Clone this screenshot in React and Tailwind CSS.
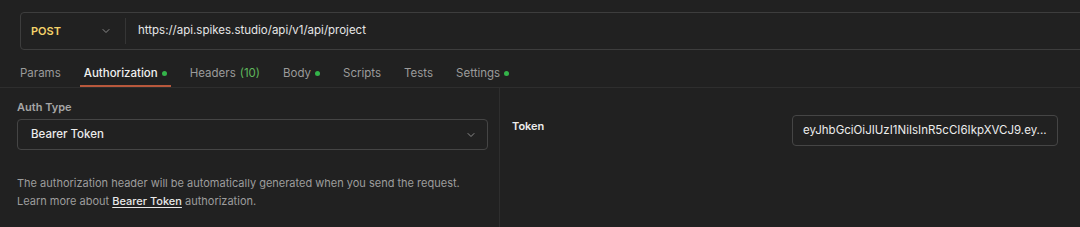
import { ChevronDown } from "lucide-react";

const tabs = [
  { label: "Params" },
  { label: "Authorization", dot: true, active: true },
  { label: "Headers", count: "(10)" },
  { label: "Body", dot: true },
  { label: "Scripts" },
  { label: "Tests" },
  { label: "Settings", dot: true },
];

export default function App() {
  return (
    <div
      className="w-[1080px] h-[227px] overflow-hidden bg-[#212121] text-[11px] text-[#e8e8e8]"
      style={{ fontFamily: "Inter, 'Noto Sans', sans-serif" }}
    >
      {/* url bar */}
      <div className="pt-[12px] pl-[20px]">
        <div className="flex items-center h-[38px] w-[1100px] border border-[#3d3d3d] rounded-[4px] bg-[#212121]">
          <div className="flex items-center w-[104px] pl-[10px] pr-[13px] justify-between">
            <span className="font-semibold text-[#f5d36a]">POST</span>
            <ChevronDown size={12} className="text-[#8a8a8a]" />
          </div>
          <div className="w-px h-[26px] bg-[#353535]" />
          <span className="pl-[12px] text-[11.5px] text-[#e6e6e6]">https://api.spikes.studio/api/v1/api/project</span>
        </div>
      </div>

      {/* tabs */}
      <div className="flex items-end h-[38px] border-b border-[#2e2e2e] pl-[20px] gap-[23px] text-[11.5px]">
        {tabs.map((t) => (
          <div
            key={t.label}
            className={`flex items-center gap-[4px] h-[28px] pt-[3px] border-b-2 ${
              t.active
                ? "border-[#b8583c] text-[#f0f0f0] font-medium -mx-[4px] px-[4px]"
                : "border-transparent text-[#9b9b9b]"
            }`}
          >
            <span>{t.label}</span>
            {t.count && <span className="text-[#5fb85c]">{t.count}</span>}
            {t.dot && <span className="w-[5px] h-[5px] rounded-full bg-[#34b44a]" />}
          </div>
        ))}
      </div>

      {/* body */}
      <div className="flex h-[140px]">
        <div className="w-[500px] border-r border-[#2e2e2e] pl-[17px] pr-[12px] pt-[11px]">
          <div className="font-semibold text-[#a6a6a6] leading-[16px]">Auth Type</div>
          <div className="mt-[4px] flex items-center justify-between h-[31px] w-[471px] border border-[#454545] rounded-[4px] pl-[13px] pr-[10px]">
            <span className="font-medium text-[11.5px] text-[#ececec]">Bearer Token</span>
            <ChevronDown size={12} className="text-[#8a8a8a]" />
          </div>
          <div className="mt-[24px] text-[#9d9d9d] leading-[18px]">
            <p>The authorization header will be automatically generated when you send the request.</p>
            <p>
              Learn more about{" "}
              <span className="font-medium text-[#e8e8e8] underline underline-offset-2">Bearer Token</span> authorization.
            </p>
          </div>
        </div>
        <div className="flex-1 flex items-start justify-between pl-[12px] pr-[22px] pt-[27px]">
          <span className="mt-[3px] font-semibold text-[#ececec]">Token</span>
          <div className="flex items-center h-[31px] w-[266px] border border-[#454545] rounded-[4px] px-[10px]">
            <span className="whitespace-nowrap text-[11.5px] text-[#ececec]">eyJhbGciOiJIUzI1NiIsInR5cCI6IkpXVCJ9.ey...</span>
          </div>
        </div>
      </div>
    </div>
  );
}
